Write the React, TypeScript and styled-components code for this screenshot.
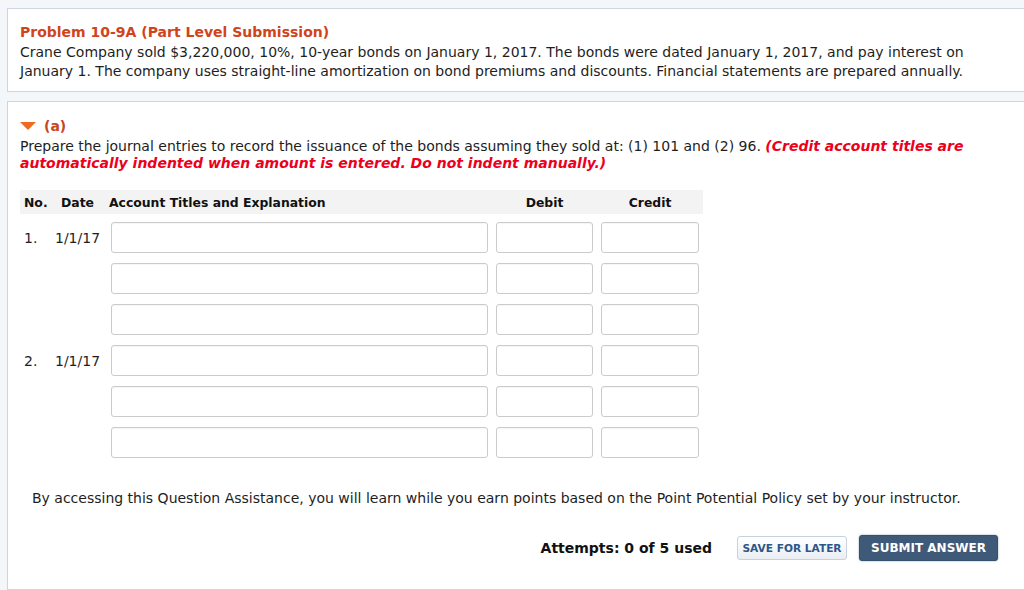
import React, { FC } from 'react';
import styled, { createGlobalStyle } from 'styled-components';

const GlobalStyle = createGlobalStyle`
  html, body {
    margin: 0;
    padding: 0;
    background: #f4f7fa;
    overflow: hidden;
  }
  body {
    font-family: 'DejaVu Sans', Verdana, sans-serif;
    color: #1e1e1e;
  }
`;

const Page = styled.div`
  box-sizing: border-box;
  width: 1040px;
  min-height: 100vh;
  padding: 8px 0 0 7px;
  display: flex;
  flex-direction: column;
  gap: 9px;
`;

const Panel = styled.section<{ grow?: boolean }>`
  background: #fff;
  border: 1px solid #cdd6e0;
  padding: 14px 12px 10px;
  flex: ${(p) => (p.grow ? 1 : 'none')};
`;

const Title = styled.h2`
  margin: 0;
  font-size: 14px;
  line-height: 19px;
  font-weight: bold;
  color: #d0441c;
`;

const Text = styled.p`
  margin: 1px 0 0;
  font-size: 14px;
  line-height: 19px;
  white-space: nowrap;
`;

const PartHeader = styled.div`
  display: flex;
  align-items: center;
  gap: 8px;
  height: 20px;
  font-size: 14px;
  font-weight: bold;
  color: #c8461f;
`;

const Caret = styled.span`
  width: 0;
  height: 0;
  border-left: 8px solid transparent;
  border-right: 8px solid transparent;
  border-top: 8px solid #f26a1f;
`;

const Prompt = styled.p`
  margin: 2px 0 0;
  font-size: 14px;
  line-height: 17px;
  white-space: nowrap;
`;

const Note = styled.em`
  color: #ec001c;
  font-weight: bold;
`;

const Grid = styled.div`
  margin-top: 18px;
  width: 683px;
  display: grid;
  grid-template-columns: 31px 56px 385px 105px 106px;
  row-gap: 10px;
`;

const HeadCell = styled.div<{ pad?: number; center?: boolean }>`
  background: #f3f3f3;
  height: 24px;
  line-height: 25px;
  font-size: 12.4px;
  font-weight: bold;
  color: #111;
  padding-left: ${(p) => p.pad ?? 0}px;
  text-align: ${(p) => (p.center ? 'center' : 'left')};
  margin-bottom: -2px;
`;

const Cell = styled.div`
  display: flex;
  align-items: center;
  font-size: 14px;
  padding-left: 4px;
`;

const InputCell = styled.div`
  padding: 0 4px;
`;

const Field = styled.input`
  display: block;
  box-sizing: border-box;
  width: 100%;
  height: 31px;
  border: 1px solid #cbcbcb;
  border-radius: 3px;
  box-shadow: inset 0 1px 1px rgba(0, 0, 0, 0.04);
  background: #fff;
  font-family: inherit;
  font-size: 13px;
  outline: none;
`;

const Assist = styled.p`
  margin: 31px 0 0 12px;
  font-size: 14px;
  line-height: 18px;
  white-space: nowrap;
`;

const ActionRow = styled.div`
  width: 978px;
  margin-top: 28px;
  display: flex;
  justify-content: flex-end;
  align-items: center;
`;

const Attempts = styled.span`
  font-size: 14px;
  font-weight: bold;
  color: #111;
  margin-right: 25px;
`;

const SaveButton = styled.button`
  height: 24px;
  width: 110px;
  padding: 0;
  border: 1px solid #c8d2de;
  border-radius: 3px;
  background: linear-gradient(#ffffff, #eaeef3);
  color: #2b568a;
  font-family: inherit;
  font-size: 10.6px;
  font-weight: bold;
  margin-right: 12px;
`;

const SubmitButton = styled.button`
  height: 26px;
  width: 139px;
  padding: 0;
  border: 1px solid #34506d;
  border-radius: 3px;
  background: #3f5a78;
  box-shadow: 0 0 2px rgba(40, 60, 90, 0.5);
  color: #fff;
  font-family: inherit;
  font-size: 12px;
  font-weight: bold;
`;

type Entry = { no?: string; date?: string };

const entries: Entry[] = [
  { no: '1.', date: '1/1/17' },
  {},
  {},
  { no: '2.', date: '1/1/17' },
  {},
  {},
];

const EntryRow: FC<Entry> = ({ no, date }) => (
  <>
    <Cell>{no}</Cell>
    <Cell>{date}</Cell>
    <InputCell>
      <Field />
    </InputCell>
    <InputCell>
      <Field />
    </InputCell>
    <InputCell>
      <Field />
    </InputCell>
  </>
);

export default function App() {
  return (
    <>
      <GlobalStyle />
      <Page>
        <Panel>
          <Title>Problem 10-9A (Part Level Submission)</Title>
          <Text>
            Crane Company sold $3,220,000, 10%, 10-year bonds on January 1, 2017. The bonds were dated January 1, 2017, and pay interest on
            <br />
            January 1. The company uses straight-line amortization on bond premiums and discounts. Financial statements are prepared annually.
          </Text>
        </Panel>
        <Panel grow>
          <PartHeader>
            <Caret />
            (a)
          </PartHeader>
          <Prompt>
            Prepare the journal entries to record the issuance of the bonds assuming they sold at: (1) 101 and (2) 96.{' '}
            <Note>
              (Credit account titles are
              <br />
              automatically indented when amount is entered. Do not indent manually.)
            </Note>
          </Prompt>
          <Grid>
            <HeadCell pad={4}>No.</HeadCell>
            <HeadCell pad={10}>Date</HeadCell>
            <HeadCell pad={2}>Account Titles and Explanation</HeadCell>
            <HeadCell center>Debit</HeadCell>
            <HeadCell center>Credit</HeadCell>
            {entries.map((e, i) => (
              <EntryRow key={i} {...e} />
            ))}
          </Grid>
          <Assist>
            By accessing this Question Assistance, you will learn while you earn points based on the Point Potential Policy set by your instructor.
          </Assist>
          <ActionRow>
            <Attempts>Attempts: 0 of 5 used</Attempts>
            <SaveButton>SAVE FOR LATER</SaveButton>
            <SubmitButton>SUBMIT ANSWER</SubmitButton>
          </ActionRow>
        </Panel>
      </Page>
    </>
  );
}
